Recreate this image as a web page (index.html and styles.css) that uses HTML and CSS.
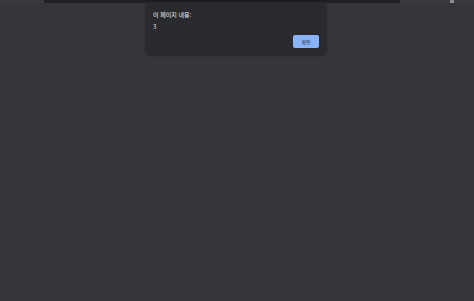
FILE: index.html
```html
<!DOCTYPE html>
<html lang="ko">
<head>
    <meta charset="UTF-8">
    <title>alert</title>
    <link rel="stylesheet" href="styles.css">
</head>
<body>
    <div class="topstrip">
        <div class="side"></div>
        <div class="bar"></div>
        <div class="side right"><span class="knob"></span></div>
    </div>
    <div class="overlay">
        <div class="dialog">
            <p class="title">이 페이지 내용:</p>
            <p class="msg">3</p>
            <div class="actions">
                <button type="button">확인</button>
            </div>
        </div>
    </div>
</body>
</html>
```

FILE: styles.css
```css
body {
    margin: 0;
    background-color: #35363a;
    font-family: "Noto Sans CJK KR", "Noto Sans", sans-serif;
    height: 301px;
    overflow: hidden;
}
.topstrip {
    display: flex;
    height: 3px;
    background-color: #3a3b3f;
}
.side {
    width: 44px;
}
.bar {
    width: 356px;
    background-color: #1f2023;
}
.right {
    flex: 1;
    display: flex;
    justify-content: flex-end;
    padding-right: 20px;
}
.knob {
    width: 4px;
    background-color: #8a8b8e;
}
.overlay {
    display: flex;
    justify-content: center;
    margin-top: -1px;
}
.dialog {
    width: 166px;
    margin-right: 2px;
    background-color: #292a2d;
    padding: 8px 7px 6px 7px;
    border-radius: 0 0 4px 4px;
    box-shadow: 0 1px 3px rgba(0, 0, 0, 0.5);
}
.title {
    margin: 0;
    font-size: 6px;
    color: #f1f3f4;
    line-height: 10px;
}
.msg {
    margin: 2px 0 0 0;
    font-size: 6px;
    color: #e8eaed;
    line-height: 10px;
}
.actions {
    display: flex;
    justify-content: flex-end;
    margin-top: 3px;
}
button {
    width: 26px;
    height: 13px;
    padding: 0;
    font-family: inherit;
    font-size: 5px;
    background-color: #8ab4f8;
    color: #202124;
    border: none;
    border-radius: 2px;
    cursor: pointer;
}
```
